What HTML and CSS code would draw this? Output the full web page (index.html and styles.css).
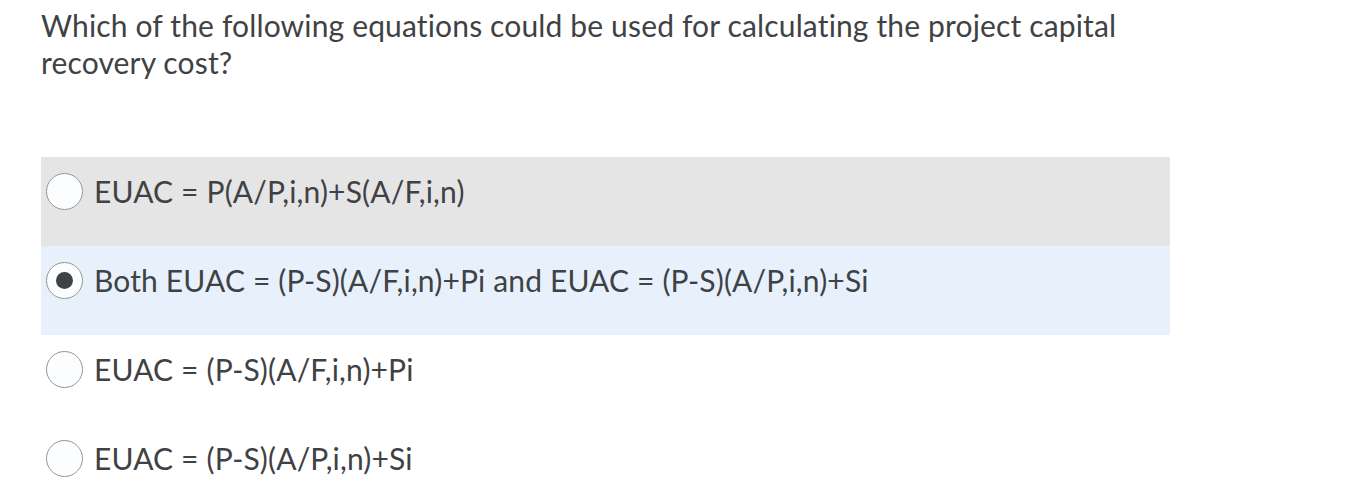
FILE: index.html
```html
<!DOCTYPE html>
<html>
<head>
<meta charset="utf-8">
<link rel="stylesheet" href="styles.css">
</head>
<body>
<div class="page">
  <div class="question">Which of the following equations could be used for calculating the project capital recovery cost?</div>
  <div class="options">
    <div class="option hover">
      <span class="radio"></span>
      <span class="label">EUAC = P(A/P,i,n)+S(A/F,i,n)</span>
    </div>
    <div class="option selected">
      <span class="radio"><span class="dot"></span></span>
      <span class="label">Both EUAC = (P-S)(A/F,i,n)+Pi and EUAC = (P-S)(A/P,i,n)+Si</span>
    </div>
    <div class="option">
      <span class="radio"></span>
      <span class="label">EUAC = (P-S)(A/F,i,n)+Pi</span>
    </div>
    <div class="option">
      <span class="radio"></span>
      <span class="label">EUAC = (P-S)(A/P,i,n)+Si</span>
    </div>
  </div>
</div>
</body>
</html>
```
FILE: styles.css
```css
html, body {
  margin: 0;
  padding: 0;
  background: #ffffff;
}
body {
  font-family: Lato, "Liberation Sans", sans-serif;
  color: #3f4245;
  font-variant-ligatures: none;
}
.page {
  padding: 7px 0 0 41px;
  width: 1129px;
}
.question {
  font-size: 30px;
  line-height: 37px;
  letter-spacing: 0.15px;
}
.options {
  margin-top: 76px;
}
.option {
  display: flex;
  align-items: center;
  height: 89px;
  box-sizing: border-box;
  padding: 16px 0 36px 5px;
}
.option.hover {
  background: #e5e5e5;
}
.option.selected {
  background: #e8f1fb;
}
.radio {
  width: 35px;
  height: 35px;
  border: 1px solid #959595;
  border-radius: 50%;
  background: #fcfdff;
  display: flex;
  align-items: center;
  justify-content: center;
  flex: none;
}
.dot {
  width: 17px;
  height: 17px;
  border-radius: 50%;
  background: #3f4245;
}
.label {
  margin-left: 11px;
  font-size: 30px;
  line-height: 37px;
  letter-spacing: 0.15px;
}
```
